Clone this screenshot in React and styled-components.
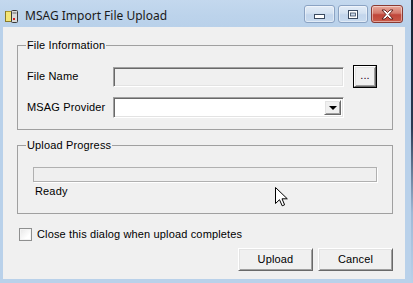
import React from "react";
import styled, { createGlobalStyle } from "styled-components";

const GlobalStyle = createGlobalStyle`
  html, body {
    margin: 0;
    padding: 0;
    background: #b9d1ea;
  }
  * {
    box-sizing: border-box;
  }
`;

const Window = styled.div`
  position: relative;
  width: 413px;
  height: 283px;
  display: flex;
  flex-direction: column;
  background: #b9d1ea;
  border-right: 2px solid;
  border-image: linear-gradient(to bottom, #14202e 0%, #2a3a52 45%, #9fb9d6 75%, #b9d1ea 100%) 1;
  font-family: "Liberation Sans", Arial, sans-serif;
  font-size: 11px;
  letter-spacing: 0.15px;
  color: #000;
`;

const TitleBar = styled.div`
  height: 27px;
  display: flex;
  align-items: flex-start;
  padding: 0 8px 0 5px;
  background: linear-gradient(to bottom, #c4d8ee 0%, #bcd3eb 60%, #b9d1ea 100%);
`;

const TitleLeft = styled.div`
  display: flex;
  align-items: center;
  flex: 1;
  margin-top: 8px;
`;

const TitleText = styled.span`
  margin-left: 7px;
  font-family: "Noto Sans", "Open Sans", sans-serif;
  font-size: 12px;
  letter-spacing: 0;
  line-height: 16px;
  color: #1a1a1a;
`;

const Caption = styled.div`
  display: flex;
  gap: 3px;
  margin-top: 5px;
`;

const CaptionButton = styled.div`
  width: ${(p) => p.$w}px;
  height: 18px;
  border-radius: 3px;
  border: 1px solid ${(p) => (p.$close ? "#8a3a32" : "#8ba3c3")};
  background: ${(p) =>
    p.$close
      ? "linear-gradient(to bottom, #e9a99b 0%, #d47a6c 45%, #c0463a 55%, #c95a48 100%)"
      : "linear-gradient(to bottom, #e3ecf7 0%, #d3e1f1 45%, #c2d5ec 55%, #c9dbef 100%)"};
  box-shadow: inset 0 0 0 1px rgba(255, 255, 255, 0.45);
  display: flex;
  align-items: center;
  justify-content: center;
`;

const Client = styled.div`
  flex: 1;
  margin: 0 6px 4px 3px;
  background: #f0f0f0;
  padding: 12px 12px 0 14px;
  display: flex;
  flex-direction: column;
`;

const GroupBox = styled.fieldset`
  margin: ${(p) => (p.$first ? "0" : "9px 0 0 0")};
  padding: 0;
  border: 1px solid #a0a0a0;
  min-width: 0;
`;

const Legend = styled.legend`
  margin-left: 8px;
  padding: 0 1px;
  line-height: 13px;
`;

const FormGrid = styled.div`
  display: grid;
  grid-template-columns: 86px 231px 33px;
  row-gap: 9px;
  align-items: center;
  padding: 13px 0 11px 9px;
`;

const Label = styled.span`
  line-height: 13px;
`;

const sunken = `
  border: 1px solid;
  border-color: #a0a0a0 #ffffff #ffffff #a0a0a0;
  box-shadow: inset 1px 1px 0 #696969, inset -1px -1px 0 #e3e3e3;
`;

const raised = `
  border: 1px solid;
  border-color: #ffffff #696969 #696969 #ffffff;
  box-shadow: inset 1px 1px 0 #e3e3e3, inset -1px -1px 0 #a0a0a0;
  background: #f0f0f0;
`;

const TextBox = styled.div`
  height: 20px;
  ${sunken}
  background: #f0f0f0;
`;

const ComboBox = styled.div`
  height: 21px;
  ${sunken}
  background: #fff;
  display: flex;
  justify-content: flex-end;
  padding: 2px;
`;

const DropButton = styled.div`
  width: 17px;
  height: 100%;
  ${raised}
  display: flex;
  align-items: center;
  justify-content: center;
`;

const Arrow = styled.span`
  width: 0;
  height: 0;
  border-left: 4px solid transparent;
  border-right: 4px solid transparent;
  border-top: 4px solid #000;
  margin-top: 1px;
`;

const BrowseButton = styled.div`
  justify-self: end;
  width: 24px;
  height: 23px;
  border: 1px solid #000;
  display: flex;
`;

const BrowseInner = styled.div`
  flex: 1;
  ${raised}
  display: flex;
  align-items: center;
  justify-content: center;
  line-height: 13px;
  padding-bottom: 2px;
  color: #200020;
`;

const ProgressBody = styled.div`
  padding: 15px;
`;

const ProgressBar = styled.div`
  height: 15px;
  border: 1px solid #b0b0b0;
  box-shadow: 1px 1px 0 #ffffff;
  background: #efefef;
`;

const Status = styled.div`
  margin: 3px 0 0 2px;
  line-height: 13px;
`;

const CheckRow = styled.label`
  display: flex;
  align-items: center;
  gap: 5px;
  margin: 14px 0 0 2px;
  line-height: 13px;
`;

const CheckBox = styled.span`
  width: 13px;
  height: 13px;
  border: 1px solid #8e8f8f;
  background: linear-gradient(135deg, #e6e6e6 0%, #ffffff 70%);
  box-shadow: inset 0 0 0 1px #f4f4f4;
`;

const ButtonRow = styled.div`
  display: flex;
  justify-content: flex-end;
  gap: 5px;
  margin-top: 7px;
`;

const DialogButton = styled.div`
  width: 75px;
  height: 23px;
  ${raised}
  display: flex;
  align-items: center;
  justify-content: center;
  line-height: 13px;
`;

const Cursor = styled.svg`
  position: absolute;
  left: 275px;
  top: 187px;
`;

function AppIcon() {
  return (
    <svg width="13" height="14" viewBox="0 0 13 14">
      <rect x="0.5" y="2.5" width="8" height="10" fill="#f4e46a" stroke="#8a7a2a" />
      <path d="M1 3h7M1 5h7M1 7h7M1 9h7M1 11h7" stroke="#e0c830" strokeWidth="0.8" />
      <path d="M2 3v9M4 3v9M6 3v9" stroke="#fff6a8" strokeWidth="0.8" />
      <rect x="6.5" y="1.5" width="6" height="12" rx="1" fill="#d8d8d8" stroke="#3a3a3a" />
      <rect x="7.5" y="3" width="4" height="2" fill="#a0a0a0" />
      <rect x="8" y="9" width="2" height="2" fill="#d02020" />
    </svg>
  );
}

function CaptionGlyph({ kind }) {
  if (kind === "min") {
    return (
      <svg width="11" height="5" viewBox="0 0 11 5" style={{ marginTop: 4 }}>
        <rect x="0.5" y="0.5" width="10" height="4" fill="#fff" stroke="#3a4a60" />
      </svg>
    );
  }
  if (kind === "max") {
    return (
      <svg width="10" height="9" viewBox="0 0 10 9">
        <rect x="0.5" y="0.5" width="9" height="8" fill="#fff" stroke="#3a4a60" />
        <rect x="2.5" y="3" width="5" height="3" fill="#c9d8ea" stroke="#3a4a60" strokeWidth="0.8" />
      </svg>
    );
  }
  return (
    <svg width="13" height="11" viewBox="0 0 13 11">
      <path
        d="M1 1h3l2.5 2.5L9 1h3L8 5.5 12 10H9L6.5 7.5 4 10H1l4-4.5z"
        fill="#fff"
        stroke="#5a1a14"
        strokeWidth="0.9"
        strokeLinejoin="round"
      />
    </svg>
  );
}

export default function App() {
  return (
    <>
      <GlobalStyle />
      <Window>
        <TitleBar>
          <TitleLeft>
            <AppIcon />
            <TitleText>MSAG Import File Upload</TitleText>
          </TitleLeft>
          <Caption>
            <CaptionButton $w={31}>
              <CaptionGlyph kind="min" />
            </CaptionButton>
            <CaptionButton $w={30}>
              <CaptionGlyph kind="max" />
            </CaptionButton>
            <CaptionButton $w={32} $close>
              <CaptionGlyph kind="close" />
            </CaptionButton>
          </Caption>
        </TitleBar>

        <Client>
          <GroupBox $first>
            <Legend>File Information</Legend>
            <FormGrid>
              <Label>File Name</Label>
              <TextBox />
              <BrowseButton>
                <BrowseInner>...</BrowseInner>
              </BrowseButton>
              <Label>MSAG Provider</Label>
              <ComboBox>
                <DropButton>
                  <Arrow />
                </DropButton>
              </ComboBox>
            </FormGrid>
          </GroupBox>

          <GroupBox>
            <Legend>Upload Progress</Legend>
            <ProgressBody>
              <ProgressBar />
              <Status>Ready</Status>
            </ProgressBody>
          </GroupBox>

          <CheckRow>
            <CheckBox />
            Close this dialog when upload completes
          </CheckRow>

          <ButtonRow>
            <DialogButton>Upload</DialogButton>
            <DialogButton>Cancel</DialogButton>
          </ButtonRow>
        </Client>

        <Cursor width="13" height="20" viewBox="0 0 13 20">
          <path
            d="M0.5 0.5V16.5L4.5 12.7L7.2 18.8L9.6 17.8L7 11.8H12.3Z"
            fill="#fff"
            stroke="#000"
            strokeLinejoin="miter"
          />
        </Cursor>
      </Window>
    </>
  );
}
